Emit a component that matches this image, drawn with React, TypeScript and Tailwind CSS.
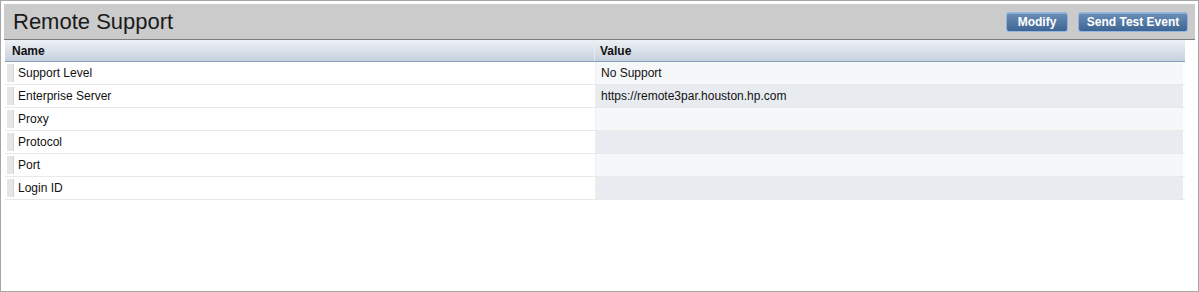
const ROWS = [
  { name: 'Support Level', value: 'No Support' },
  { name: 'Enterprise Server', value: 'https://remote3par.houston.hp.com' },
  { name: 'Proxy', value: '' },
  { name: 'Protocol', value: '' },
  { name: 'Port', value: '' },
  { name: 'Login ID', value: '' },
]

function ToolButton({ label, width }: { label: string; width: string }) {
  return (
    <button
      type="button"
      className={`${width} h-[20px] rounded-[3px] border border-[#8fb5e3] bg-gradient-to-b from-[#6c8fb8] to-[#3e6593] text-[12px] font-bold text-white leading-none shadow-[inset_0_1px_0_rgba(255,255,255,0.25)]`}
    >
      {label}
    </button>
  )
}

export default function App() {
  return (
    <div className="w-[1199px] h-[292px] bg-white border border-[#a6a6a6] p-[3px] font-['Liberation_Sans',Arial,sans-serif] text-[12px] text-[#111]">
      {/* title bar */}
      <div className="flex items-center h-[36px] bg-[#cbcbcb] border-b border-[#7c7c7c] pl-[9px] pr-[7px]">
        <h1 className="text-[22px] text-[#1a1a1a] leading-none mt-[1px]">Remote Support</h1>
        <div className="ml-auto flex gap-[10px] mt-[1px]">
          <ToolButton label="Modify" width="w-[62px]" />
          <ToolButton label="Send Test Event" width="w-[110px]" />
        </div>
      </div>

      {/* table */}
      <div className="w-[1180px] ml-[1px]">
        <div className="flex h-[22px] bg-gradient-to-b from-[#edf1f5] to-[#c6d1de] border-b border-[#8aa0b9] font-bold">
          <div className="w-[590px] pl-[7px] flex items-center border-r border-[#e6ebf0]">Name</div>
          <div className="flex-1 pl-[5px] flex items-center">Value</div>
        </div>
        {ROWS.map((row, i) => (
          <div key={row.name} className="flex h-[23px] border-b border-[#e9e9e9] pr-[2px]">
            <div className="w-[590px] flex items-stretch bg-white">
              <div className="w-[7px] ml-[2px] my-[2px] bg-[#e5e5e5] border-r border-[#d4d4d4]" />
              <div className="pl-[4px] flex items-center">{row.name}</div>
            </div>
            <div
              className={`flex-1 pl-[5px] flex items-center border-l border-[#eeeeee] ${
                i % 2 === 0 ? 'bg-[#f6f7f9]' : 'bg-[#e8ecf0]'
              }`}
            >
              {row.value}
            </div>
          </div>
        ))}
      </div>
    </div>
  )
}
